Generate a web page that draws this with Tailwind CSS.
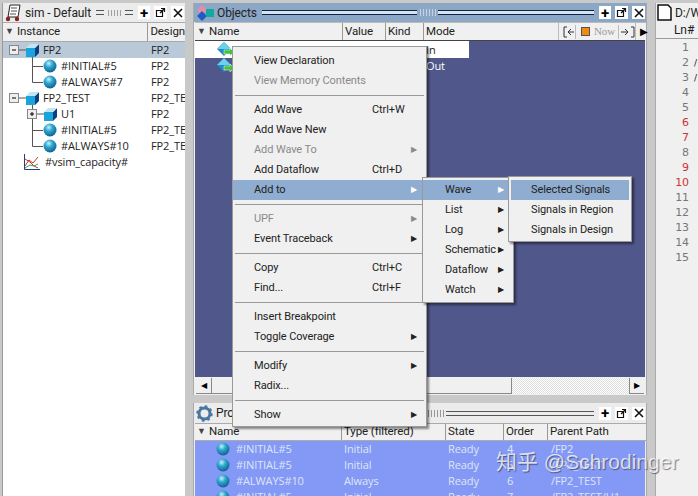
<!DOCTYPE html>
<html lang="en">
<head>
  <meta charset="UTF-8">
  <title>sim - Default</title>
  <script src="https://cdn.jsdelivr.net/npm/@tailwindcss/browser@4"></script>
</head>
<body class="bg-[#c9c9c9] text-[#222] font-['Roboto',sans-serif] text-[11px] tracking-[-0.1px] overflow-hidden">

  <!-- Shared icons -->
  <svg class="absolute w-0 h-0">
    <defs>
      <radialGradient id="ballFill" cx="0.4" cy="0.3" r="0.75">
        <stop offset="0" stop-color="#c4f0fa"/>
        <stop offset="0.4" stop-color="#2fa6cf"/>
        <stop offset="1" stop-color="#0b5a8a"/>
      </radialGradient>
    </defs>
    <symbol id="ball" viewBox="0 0 14 14"><circle cx="7" cy="7" r="6.500" fill="url(#ballFill)"/></symbol>
    <symbol id="chip" viewBox="0 0 13 13">
      <path d="M0 4h9v9H0z" fill="#1aa4dc"/>
      <path d="M9 4l4-4v9l-4 4z" fill="#0d3f80"/>
      <path d="M0 4l4-4h9L9 4z" fill="#bfe6f2"/>
    </symbol>
    <symbol id="diamond" viewBox="0 0 18 18">
      <path d="M8 1l7 7-7 7-7-7z" fill="#1d8fc4"/>
      <path d="M8 1l7 7H1z" fill="#6fd0ea"/>
      <path d="M8 9h6V7l4 4-4 4v-2H8z" fill="#43c23f" stroke="#fff" stroke-width=".5"/>
    </symbol>
  </svg>

  <div class="relative w-[698px] h-[496px] overflow-hidden flex pt-[3px] pl-[2px] gap-[8px]">

    <!-- Instance panel -->
    <section class="w-[183px] h-[493px] shrink-0 flex flex-col bg-white border-l border-[#999]">
      <div class="h-[19px] flex items-center bg-[#ececec] pl-[2px] pr-[1px]">
        <svg width="17" height="18" viewBox="0 0 17 18" class="shrink-0">
          <path d="M5 1h10l-2 12H3z" fill="#fff" stroke="#222"/>
          <path d="M6 4h6M6 7h6M5 10h6" stroke="#222" stroke-width=".8"/>
          <circle cx="3" cy="15" r="2.200" fill="#8a2020"/><circle cx="12" cy="15" r="2.200" fill="#8a2020"/>
        </svg>
        <span class="ml-[3px] text-[12px] whitespace-nowrap">sim - Default</span>
        <div class="flex-1 flex items-center mx-[5px] gap-[3px]">
          <div class="flex-1 h-[5px] border-y border-[#555]"></div>
          <div class="w-[15px] h-[6px] bg-[radial-gradient(#555_0.7px,transparent_0.8px)] bg-[length:3px_2px]"></div>
          <div class="flex-1 h-[5px] border-y border-[#555]"></div>
        </div>
        <div class="flex gap-[4px]">
          <button class="w-[12px] h-[13px] bg-white text-black font-bold text-[15px] leading-[12px]">+</button>
          <button class="w-[13px] h-[13px] bg-white flex items-center justify-center"><svg width="11" height="11" viewBox="0 0 11 11"><path d="M1.500 3.500h6v6h-6zM5 6l4-4M6 1.500h3.500V5" fill="none" stroke="#111" stroke-width="1.200"/></svg></button>
          <button class="w-[13px] h-[13px] bg-white flex items-center justify-center"><svg width="10" height="10" viewBox="0 0 10 10"><path d="M1 1l8 8M9 1l-8 8" stroke="#111" stroke-width="1.600"/></svg></button>
        </div>
      </div>
      <div class="h-[20px] flex items-center bg-[#f0f0f0] border-y border-[#aaa] overflow-hidden text-[11.5px]">
        <span class="w-[13px] text-center text-[9px] text-[#444]">▼</span>
        <span class="w-[133px] pl-[1px] border-r border-[#999] h-full flex items-center">Instance</span>
        <span class="pl-[2px]">Design</span>
      </div>
      <div class="font-['Open_Sans',sans-serif] text-[11px] whitespace-nowrap overflow-hidden [&_span]:shrink-0">
        <div class="h-4 flex items-center bg-[#b9c9d8]">
          <svg width="40" height="16" class="shrink-0"><path d="M16 8h7M29.500 14v3" stroke="#555" fill="none"/><rect x="6.500" y="3.500" width="9" height="9" fill="#eee" stroke="#888"/><path d="M9 8h4" stroke="#000"/><use href="#chip" x="23" y="2" width="13" height="13"/></svg>
          <span class="w-[108px]">FP2</span><span>FP2</span>
        </div>
        <div class="h-4 flex items-center">
          <svg width="58" height="16" class="shrink-0"><path d="M29.500 0v16M29.500 8.500H40" stroke="#555" fill="none"/><use href="#ball" x="40" y="1" width="14" height="14"/></svg>
          <span class="w-[90px]">#INITIAL#5</span><span>FP2</span>
        </div>
        <div class="h-4 flex items-center">
          <svg width="58" height="16" class="shrink-0"><path d="M29.500 0v8.500H40" stroke="#555" fill="none"/><use href="#ball" x="40" y="1" width="14" height="14"/></svg>
          <span class="w-[90px]">#ALWAYS#7</span><span>FP2</span>
        </div>
        <div class="h-4 flex items-center">
          <svg width="40" height="16" class="shrink-0"><path d="M16 8h7M29.500 14v3" stroke="#555" fill="none"/><rect x="6.500" y="3.500" width="9" height="9" fill="#eee" stroke="#888"/><path d="M9 8h4" stroke="#000"/><use href="#chip" x="23" y="2" width="13" height="13"/></svg>
          <span class="w-[108px]">FP2_TEST</span><span>FP2_TE</span>
        </div>
        <div class="h-4 flex items-center">
          <svg width="58" height="16" class="shrink-0"><path d="M29.500 0v16M34 8h7" stroke="#555" fill="none"/><rect x="24.500" y="3.500" width="9" height="9" fill="#eee" stroke="#888"/><path d="M27 8h4M29 6v4" stroke="#000"/><use href="#chip" x="41" y="2" width="13" height="13"/></svg>
          <span class="w-[90px]">U1</span><span>FP2</span>
        </div>
        <div class="h-4 flex items-center">
          <svg width="58" height="16" class="shrink-0"><path d="M29.500 0v16M29.500 8.500H40" stroke="#555" fill="none"/><use href="#ball" x="40" y="1" width="14" height="14"/></svg>
          <span class="w-[90px]">#INITIAL#5</span><span>FP2_TE</span>
        </div>
        <div class="h-4 flex items-center">
          <svg width="58" height="16" class="shrink-0"><path d="M29.500 0v8.500H40" stroke="#555" fill="none"/><use href="#ball" x="40" y="1" width="14" height="14"/></svg>
          <span class="w-[90px]">#ALWAYS#10</span><span>FP2_TE</span>
        </div>
        <div class="h-4 flex items-center">
          <svg width="42" height="16" class="shrink-0"><path d="M21.500 0v15.500H37" stroke="#1d3f8f" fill="none"/><path d="M22 12l4-6 4 3 5-6M22 5l5 3 4 4 4 2" stroke="#c33" fill="none"/><path d="M22 14l5-3 4 1 4-2" stroke="#3a3" fill="none"/></svg>
          <span>#vsim_capacity#</span>
        </div>
      </div>
    </section>

    <!-- Middle column -->
    <div class="w-[454px] shrink-0 flex flex-col">

      <!-- Objects panel -->
      <section class="h-[392px] flex flex-col border-x border-[#aaa] bg-[#f0f0f0]">
        <div class="h-[19px] flex items-center bg-[#8ca7c6] pl-[2px] pr-[1px]">
          <svg width="18" height="17" viewBox="0 0 18 17" class="shrink-0"><path d="M6 1l5 5-5 5-5-5z" fill="#e88aa8"/><path d="M6 7l5 5-5 5-5-5z" fill="#1f5bc0"/><rect x="10" y="5" width="8" height="8" fill="#14a8a0"/></svg>
          <span class="ml-[3px] text-[12px]">Objects</span>
          <div class="flex-1 flex items-center mx-[5px] gap-[2px]">
            <div class="flex-1 h-[5px] border-y border-[#0d2545] bg-[#d6e4f2]"></div>
            <div class="w-[17px] h-[7px] bg-[radial-gradient(#fff_0.7px,transparent_0.8px)] bg-[length:3px_2px]"></div>
            <div class="flex-1 h-[5px] border-y border-[#0d2545] bg-[#d6e4f2]"></div>
          </div>
          <div class="flex gap-[4px]">
            <button class="w-[12px] h-[13px] bg-white text-black font-bold text-[15px] leading-[12px]">+</button>
            <button class="w-[13px] h-[13px] bg-white flex items-center justify-center"><svg width="11" height="11" viewBox="0 0 11 11"><path d="M1.500 3.500h6v6h-6zM5 6l4-4M6 1.500h3.500V5" fill="none" stroke="#111" stroke-width="1.200"/></svg></button>
            <button class="w-[13px] h-[13px] bg-white flex items-center justify-center"><svg width="10" height="10" viewBox="0 0 10 10"><path d="M1 1l8 8M9 1l-8 8" stroke="#111" stroke-width="1.600"/></svg></button>
          </div>
        </div>
        <div class="h-[18px] flex items-center bg-[#f0f0f0] ml-[1px] text-[11.5px] border-t border-[#bbb] [&>*]:shrink-0">
          <span class="w-[13px] text-center text-[9px] text-[#444]">▼</span>
          <span class="w-[135px] pl-px h-full flex items-center border-r border-[#999]">Name</span>
          <span class="w-[43px] pl-[2px] h-full flex items-center border-r border-[#999]">Value</span>
          <span class="w-[38px] pl-[2px] h-full flex items-center border-r border-[#999]">Kind</span>
          <span class="pl-[2px] w-[134px]">Mode</span>
          <div class="flex items-center h-full border-x border-[#bbb] text-[11px] text-[#999] font-['Liberation_Serif',serif] [&>*]:shrink-0">
            <svg width="17" height="14" class="border-r border-[#bbb]"><path d="M5 2h3M5 2v10h3M15 7H9l3-3M9 7l3 3" stroke="#333" fill="none"/></svg>
            <span class="w-[9px] h-[9px] ml-[5px] bg-[#f08c10] border border-[#555]"></span>
            <span class="ml-[4px] mr-[3px]">Now</span>
            <svg width="17" height="14" class="border-l border-[#bbb]"><path d="M12 2h3v10h-3M2 7h7L6 4M9 7l-3 3" stroke="#333" fill="none"/></svg>
          </div>
          <span class="ml-[4px] text-[10px] text-black">▶</span>
        </div>
        <div class="flex-1 bg-[#50578a] mx-[1px] border-t border-[#444] font-['Open_Sans',sans-serif] text-[11px] whitespace-nowrap overflow-hidden [&_span]:shrink-0">
          <div class="h-[17px] w-[274px] pt-px bg-white flex items-center">
            <svg width="18" height="18" class="ml-[21px] shrink-0"><use href="#diamond" width="18" height="18"/></svg>
            <span class="w-[110px] pl-[8px]">clk</span><span class="w-[43px]">1'h0</span><span class="w-[39px]">Net</span><span>In</span>
          </div>
          <div class="h-[16px] flex items-center text-white">
            <svg width="18" height="18" class="ml-[21px] shrink-0"><use href="#diamond" width="18" height="18"/></svg>
            <span class="ml-[192px]">Out</span>
          </div>
        </div>
        <div class="h-[16px] mx-[2px] my-[1px] flex bg-[repeating-conic-gradient(#fff_0_25%,#ddd_0_50%)] bg-[length:2px_2px]">
          <button class="w-[16px] bg-[#f0f0f0] border-r border-b border-[#888] text-[8px] text-black">◀</button>
          <div class="w-[300px] bg-[#f0f0f0] border-r border-b border-[#888]"></div>
          <div class="flex-1"></div>
          <button class="w-[15px] bg-[#f0f0f0] border-l border-b border-[#888] text-[8px] text-black">▶</button>
        </div>
      </section>

      <!-- Processes panel -->
      <section class="mt-[8px] flex-1 flex flex-col border-x border-[#aaa] bg-[#ececec] overflow-hidden">
        <div class="h-[20px] shrink-0 flex items-center pl-[2px] pr-[1px]">
          <svg width="17" height="17" viewBox="0 0 17 17" class="shrink-0"><circle cx="8.500" cy="8.500" r="5.500" fill="none" stroke="#48779f" stroke-width="3"/><circle cx="8.500" cy="8.500" r="7" fill="none" stroke="#48779f" stroke-width="2.500" stroke-dasharray="2.500 3"/></svg>
          <span class="ml-[3px] text-[12px]">Processes</span>
          <div class="flex-1 flex items-center mx-[5px] gap-[2px]">
            <div class="flex-1 h-[5px] border-y border-[#555]"></div>
            <div class="w-[17px] h-[7px] bg-[radial-gradient(#444_0.7px,transparent_0.8px)] bg-[length:3px_2px]"></div>
            <div class="flex-1 h-[5px] border-y border-[#555]"></div>
          </div>
          <div class="flex gap-[4px]">
            <button class="w-[12px] h-[13px] bg-white text-black font-bold text-[15px] leading-[12px]">+</button>
            <button class="w-[13px] h-[13px] bg-white flex items-center justify-center"><svg width="11" height="11" viewBox="0 0 11 11"><path d="M1.500 3.500h6v6h-6zM5 6l4-4M6 1.500h3.500V5" fill="none" stroke="#111" stroke-width="1.200"/></svg></button>
            <button class="w-[13px] h-[13px] bg-white flex items-center justify-center"><svg width="10" height="10" viewBox="0 0 10 10"><path d="M1 1l8 8M9 1l-8 8" stroke="#111" stroke-width="1.600"/></svg></button>
          </div>
        </div>
        <div class="h-[18px] shrink-0 flex items-center bg-[#f0f0f0] ml-[1px] text-[11.5px] border-y border-[#aaa]">
          <span class="w-[13px] text-center text-[9px] text-[#444]">▼</span>
          <span class="w-[134px] pl-px h-full flex items-center border-r border-[#999]">Name</span>
          <span class="w-[104px] pl-[2px] h-full flex items-center border-r border-[#999]">Type (filtered)</span>
          <span class="w-[58px] pl-[2px] h-full flex items-center border-r border-[#999]">State</span>
          <span class="w-[44px] pl-[2px] h-full flex items-center border-r border-[#999]">Order</span>
          <span class="pl-[2px]">Parent Path</span>
        </div>
        <div class="flex-1 bg-[#8499f5] mx-[1px] text-[#dfe5f5] font-['Open_Sans',sans-serif] text-[11px] whitespace-nowrap [&_span]:shrink-0">
          <div class="h-4 flex items-center"><svg width="14" height="14" class="ml-[21px] shrink-0"><use href="#ball" width="14" height="14"/></svg><span class="w-[108px] ml-[6px]">#INITIAL#5</span><span class="w-[104px]">Initial</span><span class="w-[59px]">Ready</span><span class="w-[44px]">4</span><span>/FP2</span></div>
          <div class="h-4 flex items-center"><svg width="14" height="14" class="ml-[21px] shrink-0"><use href="#ball" width="14" height="14"/></svg><span class="w-[108px] ml-[6px]">#INITIAL#5</span><span class="w-[104px]">Initial</span><span class="w-[59px]">Ready</span><span class="w-[44px]">5</span><span>/FP2_TEST</span></div>
          <div class="h-4 flex items-center"><svg width="14" height="14" class="ml-[21px] shrink-0"><use href="#ball" width="14" height="14"/></svg><span class="w-[108px] ml-[6px]">#ALWAYS#10</span><span class="w-[104px]">Always</span><span class="w-[59px]">Ready</span><span class="w-[44px]">6</span><span>/FP2_TEST</span></div>
          <div class="h-4 flex items-center"><svg width="14" height="14" class="ml-[21px] shrink-0"><use href="#ball" width="14" height="14"/></svg><span class="w-[108px] ml-[6px]">#INITIAL#5</span><span class="w-[104px]">Initial</span><span class="w-[59px]">Ready</span><span class="w-[44px]">7</span><span>/FP2_TEST/U1</span></div>
        </div>
      </section>
    </div>

    <!-- Source panel, cut off by the window edge -->
    <section class="flex-1 h-[493px] bg-[#f0f0f0] border-l border-[#aaa] whitespace-nowrap overflow-hidden">
      <div class="h-[19px] flex items-center pl-[1px] text-[12px]">
        <svg width="15" height="17" class="shrink-0"><path d="M1 1h10l3 3v12H1z" fill="#fff" stroke="#111" stroke-width="1.500"/></svg>
        <span class="ml-[3px]">D:/W</span>
      </div>
      <div class="h-[17px] flex items-center border-b border-[#999] text-[12px] pl-[18px]">Ln#</div>
      <div class="pt-[2px] font-['DejaVu_Sans',sans-serif] text-[11px] text-[#777] [&>div]:h-[15px] [&>div]:w-[33px] [&>div]:flex [&>div]:items-center [&>div]:justify-end">
        <div>1</div>
        <div class="relative">2<span class="absolute left-[38px] text-[#222] text-[9px]">/</span></div>
        <div class="relative">3<span class="absolute left-[38px] text-[#222] text-[9px]">/</span></div>
        <div>4</div><div>5</div>
        <div class="text-[#c33]">6</div><div class="text-[#c33]">7</div><div>8</div>
        <div class="text-[#c33]">9</div><div class="text-[#c33]">10</div>
        <div>11</div><div>12</div><div>13</div><div>14</div><div>15</div>
      </div>
    </section>

    <!-- Context menu -->
    <div class="absolute left-[232px] top-[46px] w-[195px] pt-[4px] pb-[1px] bg-[#f0f0f0] border border-[#999] shadow-[2px_2px_2px_rgba(0,0,0,0.45)] text-[#222] [&>div]:h-5 [&>div]:flex [&>div]:items-center [&>div]:pl-[21px] [&>div]:relative">
      <div>View Declaration</div>
      <div class="text-[#8a8a8a]">View Memory Contents</div>
      <hr class="my-1 mx-[2px] border-[#999]">
      <div><span class="w-[118px]">Add Wave</span>Ctrl+W</div>
      <div>Add Wave New</div>
      <div class="text-[#8a8a8a]">Add Wave To<span class="absolute right-[9px] text-[8px]">▶</span></div>
      <div><span class="w-[118px]">Add Dataflow</span>Ctrl+D</div>
      <div class="bg-[#8fadd0]">Add to<span class="absolute right-[9px] text-[8px] text-white">▶</span></div>
      <hr class="my-1 mx-[2px] border-[#999]">
      <div class="text-[#8a8a8a]">UPF<span class="absolute right-[9px] text-[8px]">▶</span></div>
      <div>Event Traceback<span class="absolute right-[9px] text-[8px]">▶</span></div>
      <hr class="my-1 mx-[2px] border-[#999]">
      <div><span class="w-[118px]">Copy</span>Ctrl+C</div>
      <div><span class="w-[118px]">Find...</span>Ctrl+F</div>
      <hr class="my-1 mx-[2px] border-[#999]">
      <div>Insert Breakpoint</div>
      <div>Toggle Coverage<span class="absolute right-[9px] text-[8px]">▶</span></div>
      <hr class="my-1 mx-[2px] border-[#999]">
      <div>Modify<span class="absolute right-[9px] text-[8px]">▶</span></div>
      <div>Radix...</div>
      <hr class="my-1 mx-[2px] border-[#999]">
      <div>Show<span class="absolute right-[9px] text-[8px]">▶</span></div>
    </div>

    <!-- Add to submenu -->
    <div class="absolute left-[422px] top-[177px] w-[92px] pt-[2px] pb-[2px] bg-[#f0f0f0] border border-[#999] shadow-[2px_2px_2px_rgba(0,0,0,0.45)] [&>div]:h-5 [&>div]:flex [&>div]:items-center [&>div]:pl-[22px] [&>div]:relative">
      <div class="bg-[#8fadd0]">Wave<span class="absolute right-[9px] text-[8px] text-white">▶</span></div>
      <div>List<span class="absolute right-[9px] text-[8px]">▶</span></div>
      <div>Log<span class="absolute right-[9px] text-[8px]">▶</span></div>
      <div>Schematic<span class="absolute right-[9px] text-[8px]">▶</span></div>
      <div>Dataflow<span class="absolute right-[9px] text-[8px]">▶</span></div>
      <div>Watch<span class="absolute right-[9px] text-[8px]">▶</span></div>
    </div>

    <!-- Wave submenu -->
    <div class="absolute left-[508px] top-[176px] w-[124px] px-[2px] pt-[3px] pb-[1px] bg-[#f0f0f0] border border-[#999] shadow-[2px_2px_2px_rgba(0,0,0,0.45)] [&>div]:h-5 [&>div]:flex [&>div]:items-center [&>div]:pl-[20px]">
      <div class="bg-[#8fadd0]">Selected Signals</div>
      <div>Signals in Region</div>
      <div>Signals in Design</div>
    </div>

    <!-- Watermark -->
    <div class="absolute left-[496px] top-[449px] text-[21px] tracking-normal leading-[26px] text-white/75 whitespace-nowrap font-['Liberation_Sans','Noto_Sans_CJK_SC',sans-serif] [text-shadow:1px_1px_1px_rgba(40,40,60,0.6)]">知乎 @Schrodinger</div>
  </div>
</body>
</html>
